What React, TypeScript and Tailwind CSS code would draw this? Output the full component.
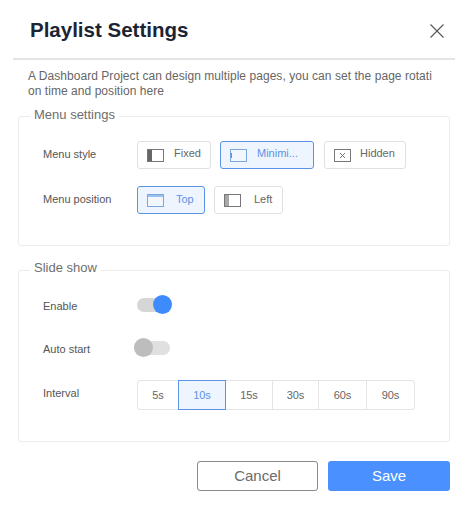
import React, { FC, ReactNode } from "react";

const IconBox: FC<{ active?: boolean; children?: ReactNode }> = ({ active, children }) => (
  <svg width="17" height="13" viewBox="0 0 17 13" className="shrink-0">
    <rect
      x="0.5"
      y="0.5"
      width="16"
      height="12"
      fill={active ? "#f2f7fe" : "#fff"}
      stroke={active ? "#7aa6e4" : "#777"}
    />
    {children}
  </svg>
);

const StyleButton: FC<{
  label: string;
  width: string;
  icon: ReactNode;
  active?: boolean;
  labelClass: string;
}> = ({ label, width, icon, active, labelClass }) => (
  <button
    className={`flex h-[28px] items-center rounded-[3px] border pl-[9px] text-[11px] ${width} ${
      active ? "border-[#5b93e6] bg-[#eff5fe] text-[#5b93e6]" : "border-[#e0e0e0] bg-white text-[#666]"
    }`}
  >
    {icon}
    <span className={labelClass}>{label}</span>
  </button>
);

const Section: FC<{ title: string; height: string; legendClass: string; children: ReactNode }> = ({
  title,
  height,
  legendClass,
  children,
}) => (
  <fieldset className={`mx-[18px] rounded-[3px] border border-[#ececec] ${height}`}>
    <legend className={`ml-[11px] px-[4px] text-[13px] leading-[15px] text-[#6e6e6e] ${legendClass}`}>{title}</legend>
    <div className="pl-[24px]">{children}</div>
  </fieldset>
);

const Row: FC<{ label: string; children: ReactNode; className?: string; labelClass?: string }> = ({
  label,
  children,
  className,
  labelClass,
}) => (
  <div className={`flex items-center ${className}`}>
    <span className={`w-[94px] shrink-0 text-[11px] text-[#555] ${labelClass}`}>{label}</span>
    {children}
  </div>
);

const intervals = [
  { label: "5s", width: "w-[40px]" },
  { label: "10s", width: "w-[48px]", active: true },
  { label: "15s", width: "w-[47px]" },
  { label: "30s", width: "w-[46px]" },
  { label: "60s", width: "w-[48px]" },
  { label: "90s", width: "w-[47px]" },
];

export default function App() {
  return (
    <div className="h-[510px] w-[468px] overflow-hidden bg-white font-['Liberation_Sans',Arial,sans-serif]">
      <div className="mx-[13px] flex h-[60px] items-center justify-between border-b-2 border-[#e4e4e4] pl-[17px] pr-[11px] pt-[3px]">
        <h1 className="text-[20.5px] font-bold text-[#1b2433]">Playlist Settings</h1>
        <svg width="14" height="14" viewBox="0 0 14 14">
          <path d="M0.5 0.5 L13.5 13.5 M13.5 0.5 L0.5 13.5" stroke="#555" strokeWidth="1.1" fill="none" />
        </svg>
      </div>

      <p className="mt-[9px] w-[436px] pl-[28px] text-[12px] leading-[15px] tracking-[0.05px] break-all text-[#666]">
        A Dashboard Project can design multiple pages, you can set the page rotation time and position here
      </p>

      <div className="mt-[10px]">
        <Section title="Menu settings" height="h-[137px]" legendClass="-translate-y-[2px]">
          <Row label="Menu style" className="mt-[17px]" labelClass="-translate-y-px">
            <div className="flex">
              <StyleButton
                label="Fixed"
                width="w-[74px] mr-[9px]"
                labelClass="ml-[10px] -mt-[3px]"
                icon={
                  <IconBox>
                    <rect x="1" y="1" width="4" height="11" fill="#666" />
                  </IconBox>
                }
              />
              <StyleButton
                label="Minimi..."
                width="w-[94px] mr-[10px]"
                labelClass="ml-[10px] -mt-[3px]"
                active
                icon={
                  <IconBox active>
                    <rect x="1" y="4" width="1" height="5" fill="#5b93e6" />
                  </IconBox>
                }
              />
              <StyleButton
                label="Hidden"
                width="w-[82px]"
                labelClass="ml-[9px] -mt-[3px]"
                icon={
                  <IconBox>
                    <path d="M6 4 L11 9 M11 4 L6 9" stroke="#777" strokeWidth="1" />
                  </IconBox>
                }
              />
            </div>
          </Row>
          <Row label="Menu position" className="mt-[17px]" labelClass="-translate-y-px">
            <div className="flex gap-[9px]">
              <StyleButton
                label="Top"
                width="w-[68px]"
                labelClass="ml-[12px] -mt-[1px]"
                active
                icon={
                  <IconBox active>
                    <rect x="1" y="1" width="15" height="2" fill="#9dbfec" />
                  </IconBox>
                }
              />
              <StyleButton
                label="Left"
                width="w-[69px]"
                labelClass="ml-[13px] -mt-[1px]"
                icon={
                  <IconBox>
                    <rect x="1" y="1" width="4" height="11" fill="#a8a8a8" />
                  </IconBox>
                }
              />
            </div>
          </Row>
        </Section>
      </div>

      <div className="mt-[17px]">
        <Section title="Slide show" height="h-[179px]" legendClass="-translate-y-[3px]">
          <Row label="Enable" className="mt-[17px] h-[19px]" labelClass="translate-y-[2px]">
            <div className="relative h-[14px] w-[33px] rounded-full bg-[#d6d6d6]">
              <span className="absolute -top-[3px] left-[16px] h-[19px] w-[19px] rounded-full bg-[#3d8bfd]" />
            </div>
          </Row>
          <Row label="Auto start" className="mt-[24px] h-[19px]" labelClass="translate-y-[2px]">
            <div className="relative -ml-[3px] h-[14px] w-[36px] rounded-full bg-[#e0e0e0]">
              <span className="absolute -top-[3px] left-0 h-[19px] w-[19px] rounded-full bg-[#bdbdbd]" />
            </div>
          </Row>
          <Row label="Interval" className="mt-[23px]" labelClass="-translate-y-[2px]">
            <div className="flex h-[30px] rounded-[3px] border border-[#e4e4e4]">
              {intervals.map((item, i) => (
                <button
                  key={item.label}
                  className={`-my-px flex items-center justify-center text-[11px] ${item.width} ${
                    item.active
                      ? "border border-[#5b93e6] bg-[#eff5fe] text-[#5b93e6]"
                      : `text-[#666] ${i > 1 && i < 5 ? "border-r border-[#e4e4e4]" : ""}`
                  }`}
                >
                  {item.label}
                </button>
              ))}
            </div>
          </Row>
        </Section>
      </div>

      <div className="mt-[19px] flex justify-end gap-[10px] pr-[18px]">
        <button className="h-[30px] w-[121px] rounded-[3px] border border-[#8a8a8a] bg-white text-[15px] text-[#6b6b6b]">
          Cancel
        </button>
        <button className="h-[30px] w-[122px] rounded-[3px] bg-[#4a90ff] text-[15px] text-white">Save</button>
      </div>
    </div>
  );
}
